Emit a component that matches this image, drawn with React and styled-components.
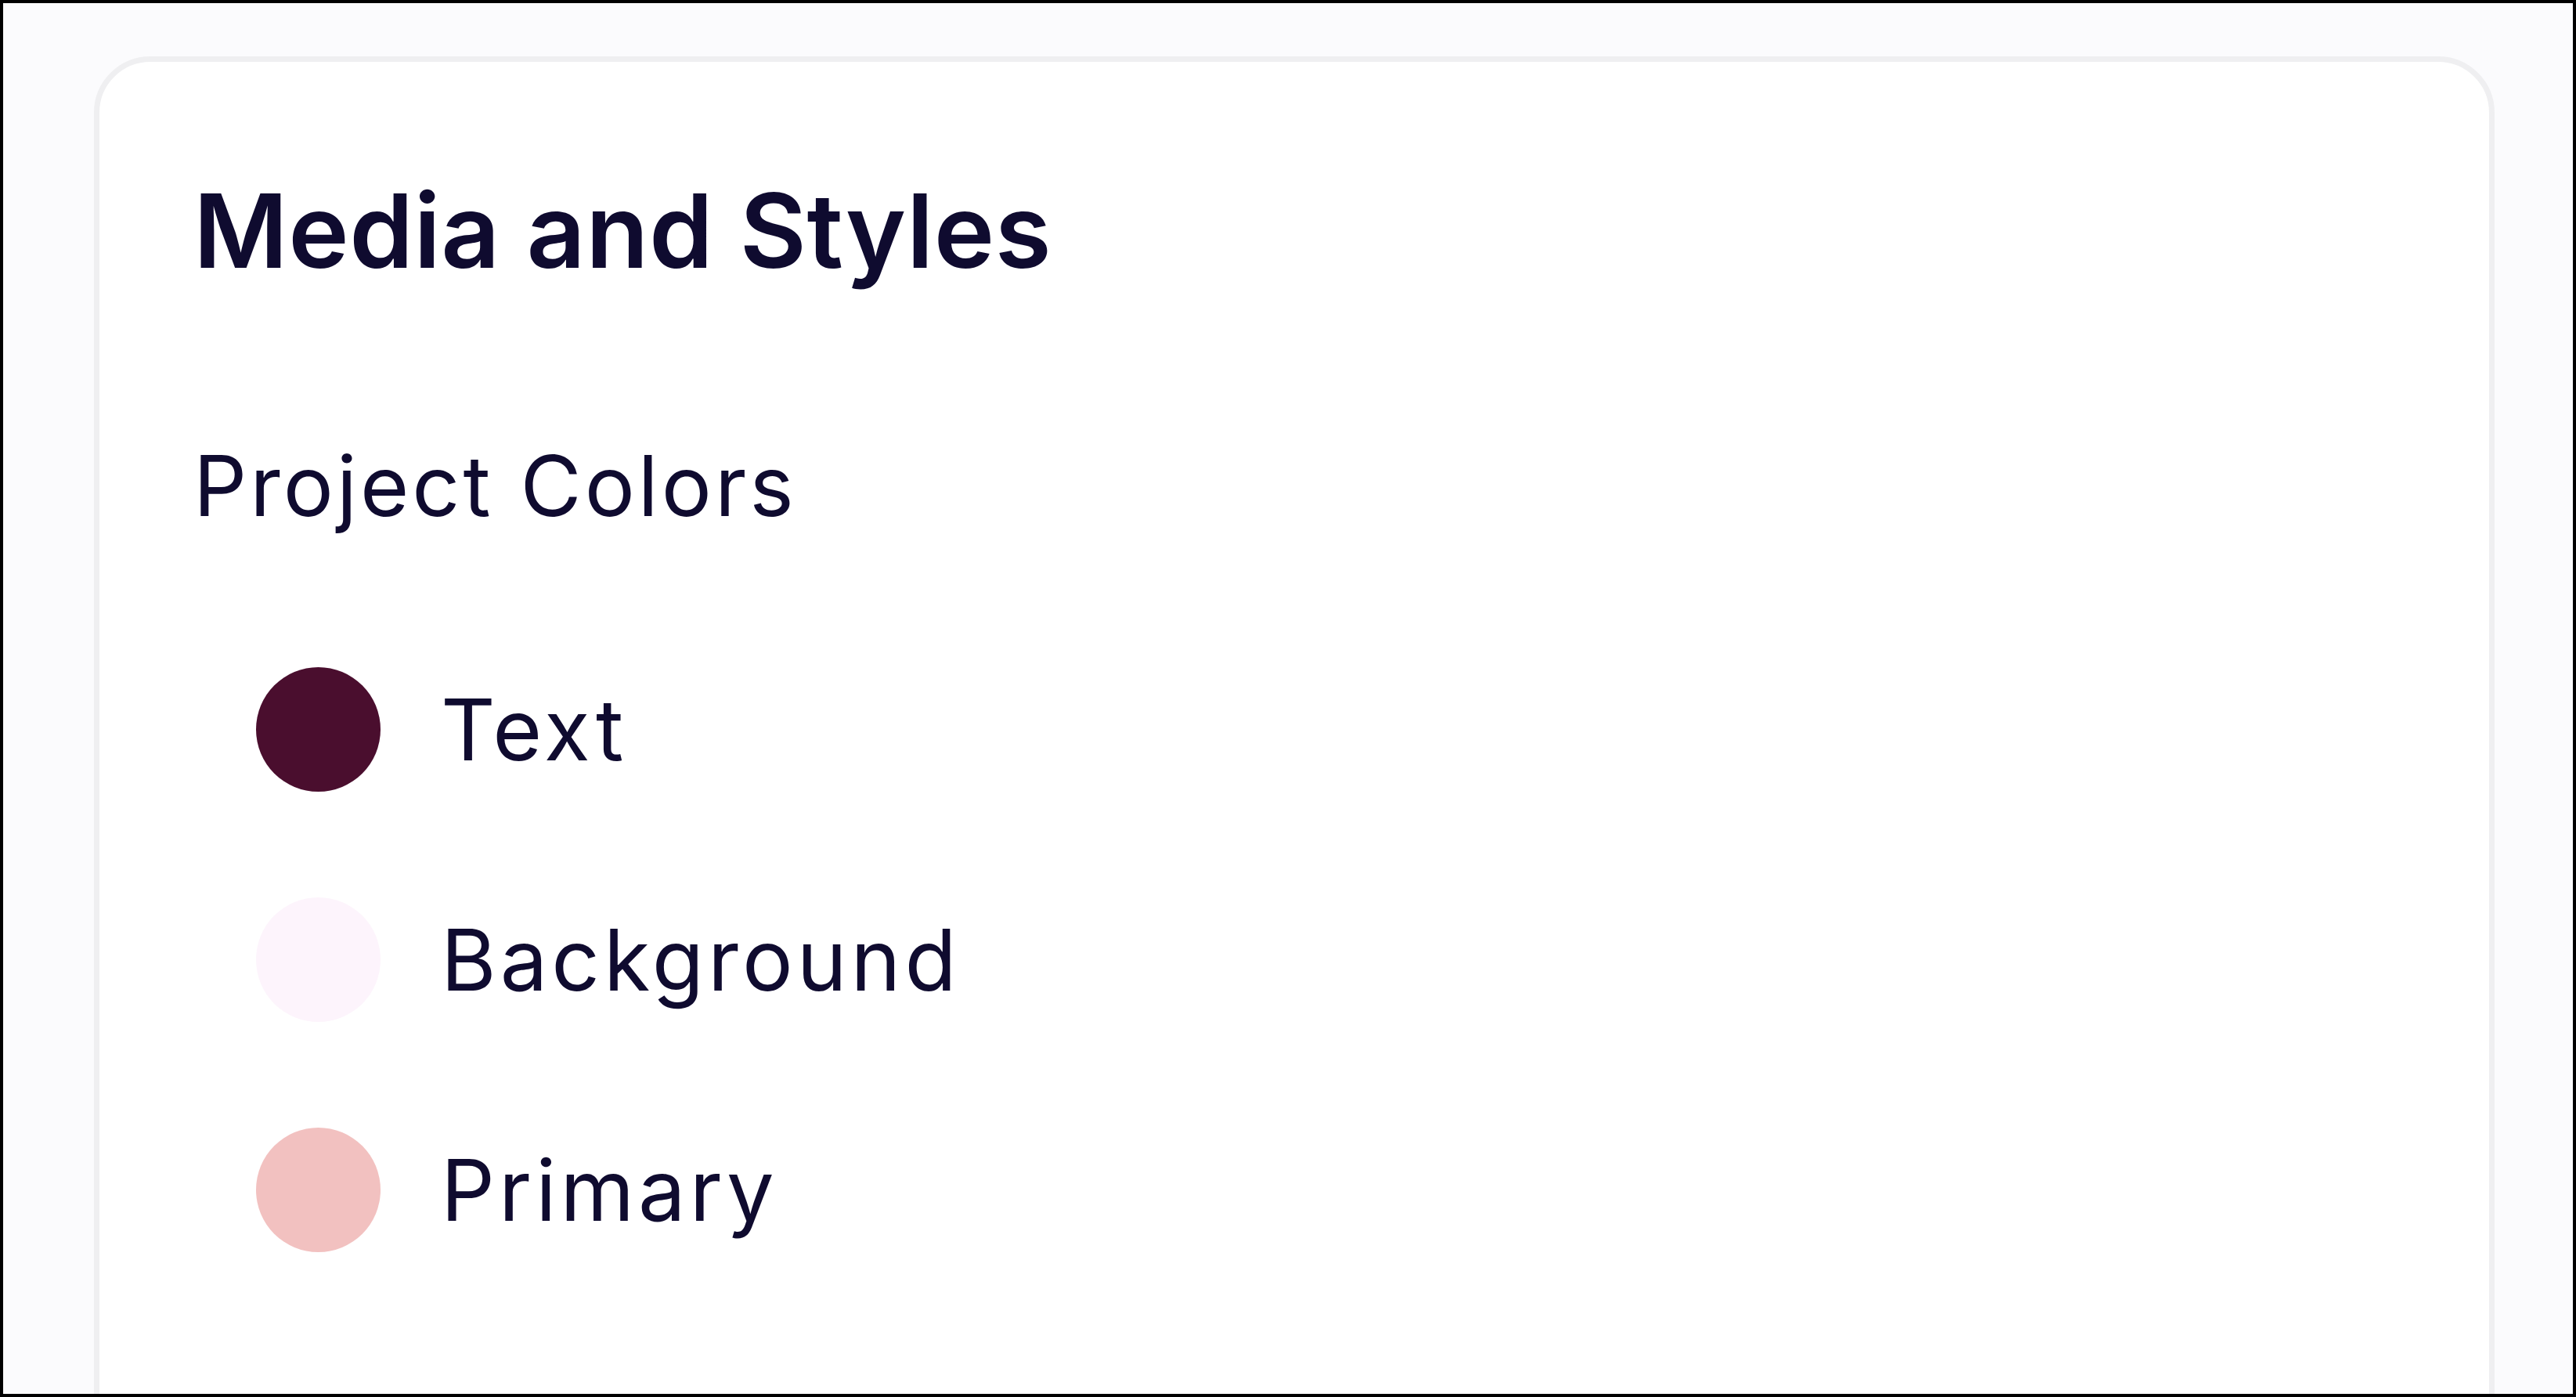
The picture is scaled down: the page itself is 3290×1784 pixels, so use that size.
import React from "react";
import styled, { createGlobalStyle } from "styled-components";

const GlobalStyle = createGlobalStyle`
  html, body {
    margin: 0;
    padding: 0;
    background: #000;
  }
  * {
    box-sizing: border-box;
  }
`;

const Frame = styled.div`
  width: 3290px;
  height: 1784px;
  border: 4px solid #000; /* dark frame round the shot */
  background: #fbfbfd;
  overflow: hidden;
  padding: 68px 100px 0 116px;
  font-family: Inter, "Noto Sans", sans-serif;
  color: #0f0b2f;
`;

const Card = styled.section`
  min-height: 1900px;
  background: #ffffff;
  border: 7px solid #efeff1;
  border-radius: 72px;
  padding: 150px 120px 0;
`;

const Title = styled.h2`
  margin: 0;
  font-size: 131px;
  line-height: 1;
  font-weight: 600;
  letter-spacing: 0.5px;
`;

const SubTitle = styled.h3`
  margin: 207px 0 0;
  font-size: 107px;
  line-height: 1;
  font-weight: 400;
  letter-spacing: 4px;
`;

const SwatchList = styled.ul`
  list-style: none;
  margin: 178px 0 0;
  padding: 0 0 0 80px;
  display: flex;
  flex-direction: column;
  gap: 135px;
`;

const SwatchRow = styled.li`
  display: flex;
  align-items: center;
  gap: 77px;
`;

const Dot = styled.span`
  width: 159px;
  height: 159px;
  border-radius: 50%;
  flex-shrink: 0;
  background: ${(p) => p.$color};
`;

const Label = styled.span`
  font-size: 108px;
  line-height: 1;
  font-weight: 400;
  letter-spacing: 5px;
`;

const colors = [
  { name: "Text", value: "#4a0e2e" },
  { name: "Background", value: "#fdf4fc" },
  { name: "Primary", value: "#f2c1c0" },
];

export default function App() {
  return (
    <>
      <GlobalStyle />
      <Frame>
        <Card>
          <Title>Media and Styles</Title>
          <SubTitle>Project Colors</SubTitle>
          <SwatchList>
            {colors.map((c) => (
              <SwatchRow key={c.name}>
                <Dot $color={c.value} />
                <Label>{c.name}</Label>
              </SwatchRow>
            ))}
          </SwatchList>
        </Card>
      </Frame>
    </>
  );
}
